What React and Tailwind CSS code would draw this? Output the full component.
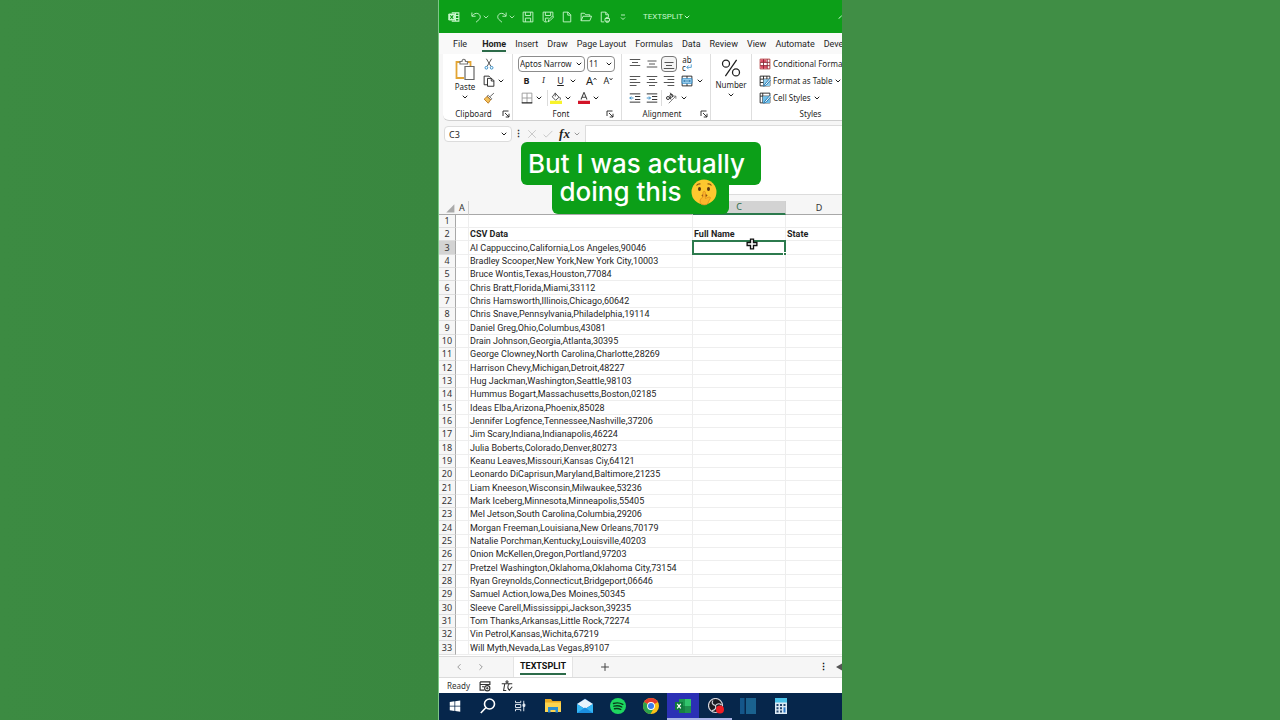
import clsx from 'clsx';
import { ChevronDown, ChevronLeft, ChevronRight, Plus } from 'lucide-react';

const tabs = [
	'Home',
	'Insert',
	'Draw',
	'Page Layout',
	'Formulas',
	'Data',
	'Review',
	'View',
	'Automate',
	'Developer',
];

const records = [
	'Al Cappuccino,California,Los Angeles,90046',
	'Bradley Scooper,New York,New York City,10003',
	'Bruce Wontis,Texas,Houston,77084',
	'Chris Bratt,Florida,Miami,33112',
	'Chris Hamsworth,Illinois,Chicago,60642',
	'Chris Snave,Pennsylvania,Philadelphia,19114',
	'Daniel Greg,Ohio,Columbus,43081',
	'Drain Johnson,Georgia,Atlanta,30395',
	'George Clowney,North Carolina,Charlotte,28269',
	'Harrison Chevy,Michigan,Detroit,48227',
	'Hug Jackman,Washington,Seattle,98103',
	'Hummus Bogart,Massachusetts,Boston,02185',
	'Ideas Elba,Arizona,Phoenix,85028',
	'Jennifer Logfence,Tennessee,Nashville,37206',
	'Jim Scary,Indiana,Indianapolis,46224',
	'Julia Boberts,Colorado,Denver,80273',
	'Keanu Leaves,Missouri,Kansas Ciy,64121',
	'Leonardo DiCaprisun,Maryland,Baltimore,21235',
	'Liam Kneeson,Wisconsin,Milwaukee,53236',
	'Mark Iceberg,Minnesota,Minneapolis,55405',
	'Mel Jetson,South Carolina,Columbia,29206',
	'Morgan Freeman,Louisiana,New Orleans,70179',
	'Natalie Porchman,Kentucky,Louisville,40203',
	'Onion McKellen,Oregon,Portland,97203',
	'Pretzel Washington,Oklahoma,Oklahoma City,73154',
	'Ryan Greynolds,Connecticut,Bridgeport,06646',
	'Samuel Action,Iowa,Des Moines,50345',
	'Sleeve Carell,Mississippi,Jackson,39235',
	'Tom Thanks,Arkansas,Little Rock,72274',
	'Vin Petrol,Kansas,Wichita,67219',
	'Will Myth,Nevada,Las Vegas,89107',
];

const rows = [
	{ b: '', c: '', d: '' },
	{ b: 'CSV Data', c: 'Full Name', d: 'State', heading: true },
	...records.map((b) => ({ b, c: '', d: '' })),
];

const Icon = ({ children, className = 'size-3', box = '0 0 16 16' }) => (
	<svg
		viewBox={box}
		className={clsx('shrink-0', className)}
		fill="none"
		stroke="currentColor"
		strokeWidth="1.2"
		aria-hidden="true">
		{children}
	</svg>
);

const Caret = ({ className }) => (
	<ChevronDown
		className={clsx('size-2 shrink-0', className)}
		strokeWidth={3}
		aria-hidden="true"
	/>
);

const Tool = ({ label, children, className = 'w-4' }) => (
	<button
		type="button"
		aria-label={label}
		className={clsx('flex h-4 shrink-0 items-center justify-center', className)}>
		{children}
	</button>
);

const Divider = () => <div className="h-4 w-px shrink-0 bg-[#dcdcdc]" />;

const Lines = ({ d }) => (
	<Icon className="size-3 text-[#444]">
		<path d={d} />
	</Icon>
);

const TitleBar = () => (
	<header className="flex h-[33px] items-center overflow-hidden bg-[#0c9f18] pl-[9px] text-[#c9f7cd]">
		<Icon className="mr-2.5 size-3">
			<path d="M5 2.5h9.5v11H5M5 6h9.5M5 10h9.5M10 2.5v11" strokeWidth="1.4" />
			<path d="M1 4h8v8H1z" fill="currentColor" />
			<path d="m3 5.8 4 4.6M7 5.8l-4 4.6" stroke="#0c9f18" strokeWidth="1.4" />
		</Icon>
		<Tool label="Undo" className="w-3">
			<Icon>
				<path d="M2.5 2v5h5M3 6.5C5 3.5 8 2.5 10.5 3.5c3.5 1.5 4 5 2 7.5L8 15" />
			</Icon>
		</Tool>
		<Caret className="mr-1.5 opacity-80" />
		<Tool label="Redo" className="w-3">
			<Icon>
				<path d="M13.5 2v5h-5M13 6.5C11 3.5 8 2.5 5.5 3.5 2 5 1.5 8.5 3.5 11L8 15" />
			</Icon>
		</Tool>
		<Caret className="mr-0.5 opacity-80" />
		<Tool label="Save" className="w-5">
			<Icon>
				<path d="M1.5 1.5h13v13h-13zM4.5 1.5V6h7V1.5M4.5 14.5v-5h7v5" />
			</Icon>
		</Tool>
		<Tool label="Save As" className="w-[19px]">
			<Icon>
				<path d="M7 14.5H3.5l-2-2v-11h13V7M4.5 1.5V6h7V1.5M4.5 14V9.5H9M8 14.5l1-3 5-5L15.5 8l-5 5z" />
			</Icon>
		</Tool>
		<Tool label="New" className="w-[19px]">
			<Icon>
				<path d="M3 1.5h6.5L13 5v9.5H3zM9 1.5v4h4" />
			</Icon>
		</Tool>
		<Tool label="Open" className="w-[19px]">
			<Icon>
				<path d="M1.5 13V3H6l1.5 2H13v2M1.5 13 4 7h11.5L13 13z" />
			</Icon>
		</Tool>
		<Tool label="Print Preview" className="w-5">
			<Icon>
				<path d="M7 14.5H3v-13h6L12.5 5v3M9 1.5V5h3.5M8 10h6v3.5H8zM9.5 10V8.5h3V10M9.5 13.5V15h3v-1.5" />
			</Icon>
		</Tool>
		<Tool label="Customize Quick Access Toolbar" className="w-4">
			<Icon className="size-2">
				<path d="M4 4h8M4 9l4 4 4-4" strokeWidth="1.8" />
			</Icon>
		</Tool>
		<button
			type="button"
			className="ml-3 flex items-center font-['Roboto'] text-[8px] leading-3">
			TEXTSPLIT
			<Caret />
		</button>
		<Icon className="ml-auto size-1">
			<path d="M2 15 15 3" strokeWidth="4" />
		</Icon>
	</header>
);

const RibbonTabs = () => (
	<nav className="flex h-[21px] items-center gap-[9px] overflow-hidden bg-[#f9f9f9] pl-3.5 font-['Roboto'] text-[9px]">
		<a href="#file" className="mr-1.5 shrink-0 leading-3">
			File
		</a>
		{tabs.map((tab) => (
			<a
				key={tab}
				href={`#${tab}`}
				className={clsx(
					'shrink-0 border-b-2 pt-0.5 leading-3',
					tab === 'Home'
						? 'border-[#2c6b49] font-bold'
						: 'border-transparent',
				)}>
				{tab}
			</a>
		))}
	</nav>
);

const Group = ({ title, launcher, className, children }) => (
	<section
		className={clsx(
			'flex h-[66px] shrink-0 flex-col border-r border-[#dedede]',
			className,
		)}>
		<div className="flex flex-1 items-start">{children}</div>
		<div className="relative flex h-3 items-center justify-center pr-3 leading-3">
			{title}
			{launcher && (
				<button
					type="button"
					aria-label={`${title} settings`}
					className="absolute right-0.5 bottom-0.5">
					<Icon className="size-2">
						<path d="M2 12V2h11M6 6l8 8M14 7.5V14H7.5" strokeWidth="1.8" />
					</Icon>
				</button>
			)}
		</div>
	</section>
);

const Dropdown = ({ label, value, className }) => (
	<div className={clsx('relative h-4', className)}>
		<select
			aria-label={label}
			defaultValue={value}
			className="h-4 w-full appearance-none rounded border border-[#8c8c8c] bg-white pl-px leading-3">
			<option>{value}</option>
		</select>
		<Caret className="pointer-events-none absolute top-1 right-0.5" />
	</div>
);

const Clipboard = () => (
	<Group title="Clipboard" launcher className="w-[70px] pl-1">
		<button
			type="button"
			className="flex w-9 shrink-0 flex-col items-center pt-1 leading-3">
			<Icon className="mb-px h-[22px] w-5" box="0 0 20 22">
				<path d="M9 20H1.5V4H5M12 4h3.5v4" stroke="#e3a534" strokeWidth="1.8" />
				<path d="M5 6V3.5h2c0-3 3.5-3 3.5 0h2V6z" stroke="#777" />
				<path d="M10 8.5h9v13h-9z" fill="#fff" stroke="#666" />
			</Icon>
			Paste
			<Caret />
		</button>
		<div className="flex flex-col gap-px pt-0.5">
			<Tool label="Cut" className="w-3">
				<Icon>
					<path d="m4.500 1 6 10M11.500 1l-6 10" stroke="#444" />
					<circle cx="4.5" cy="13" r="1.8" stroke="#2686c4" />
					<circle cx="11.5" cy="13" r="1.8" stroke="#2686c4" />
				</Icon>
			</Tool>
			<Tool label="Copy" className="w-[22px] gap-0.5">
				<Icon>
					<path d="M6 13H1.5V1.5H8l2 2M6 4.500h5.500l3 3V15H6zM11 4.500V8h3.500" />
				</Icon>
				<Caret />
			</Tool>
			<Tool label="Format Painter" className="w-3">
				<Icon>
					<path d="M14.500 1.500 9.500 6M7 4.500 11.500 9l-1 1.500-5-5z" stroke="#555" />
					<path d="M5.500 6 10 10.500 7 15 1.500 9.500z" fill="#f3c15b" stroke="#bd7a1f" />
				</Icon>
			</Tool>
		</div>
	</Group>
);

const FontGroup = () => (
	<Group title="Font" launcher className="w-[109px] px-[5px]">
		<div className="flex flex-col gap-px pt-0.5">
			<div className="flex gap-0.5">
				<Dropdown label="Font" value="Aptos Narrow" className="w-[67px]" />
				<Dropdown label="Font Size" value="11" className="w-7" />
			</div>
			<div className="flex items-center text-[9px]">
				<Tool label="Bold" className="w-[17px]">
					<b>B</b>
				</Tool>
				<Tool label="Italic" className="w-[17px]">
					<i className="font-serif">I</i>
				</Tool>
				<Tool label="Underline" className="w-[17px]">
					<u>U</u>
				</Tool>
				<Caret />
				<Tool label="Increase Font Size" className="ml-1.5 w-[17px] text-[11px]">
					A
					<Icon className="mb-1 size-1">
						<path d="m2 12 6-8 6 8" strokeWidth="3" />
					</Icon>
				</Tool>
				<Tool label="Decrease Font Size" className="w-[17px]">
					A
					<Icon className="mb-1 size-1">
						<path d="m2 4 6 8 6-8" strokeWidth="3" />
					</Icon>
				</Tool>
			</div>
			<div className="flex items-center">
				<Tool label="Borders" className="w-[17px]">
					<Icon>
						<path d="M1.500 1.500h13v13M1.500 1.500v13M8 1.500v13M1.500 8h13" stroke="#999" />
						<path d="M1 14.500h14" stroke="#222" strokeWidth="1.5" />
					</Icon>
				</Tool>
				<Caret className="mr-1" />
				<Divider />
				<Tool label="Fill Color" className="w-4">
					<Icon>
						<path d="M7 1.500 12 7l-4.500 4L3 6.500zM7 1v5M12.500 6.500c2 2 1.500 4 .5 4" stroke="#444" />
						<path d="M0 11.500h16V16H0z" fill="#f8f32b" stroke="none" />
					</Icon>
				</Tool>
				<Caret className="mr-1" />
				<Tool label="Font Color" className="w-4">
					<Icon>
						<path d="M4 10 8 .5 12 10M5.500 7h5" stroke="#444" strokeWidth="1.4" />
						<path d="M0 11.500h16V16H0z" fill="#d21428" stroke="none" />
					</Icon>
				</Tool>
				<Caret />
			</div>
		</div>
	</Group>
);

const AlignmentGroup = () => (
	<Group title="Alignment" launcher className="w-[89px] pl-1">
		<div className="flex flex-col gap-px pt-0.5">
			<div className="flex items-center">
				<Tool label="Top Align" className="w-[17px]">
					<Lines d="M1 2h14M4 6h8M1 10h14" />
				</Tool>
				<Tool label="Middle Align" className="w-[18px]">
					<Lines d="M2 4h12M4 8h8M1 12h14" />
				</Tool>
				<Tool
					label="Bottom Align"
					className="w-4 rounded border border-[#777] bg-[#f5f5f5]">
					<Lines d="M2 6h12M4 10h8M1 14h14" />
				</Tool>
				<Tool label="Wrap Text" className="w-5 flex-col leading-2">
					<span>ab</span>
					<span className="flex">
						c
						<Icon className="size-1.5 text-[#2686c4]">
							<path d="M14 1v8H3M7 4 2 9l5 5" strokeWidth="2" />
						</Icon>
					</span>
				</Tool>
			</div>
			<div className="flex items-center">
				<Tool label="Align Left" className="w-[17px]">
					<Lines d="M1 2h14M1 6h9M1 10h14M1 14h9" />
				</Tool>
				<Tool label="Center" className="w-[18px]">
					<Lines d="M1 2h14M4 6h8M1 10h14M4 14h8" />
				</Tool>
				<Tool label="Align Right" className="w-4">
					<Lines d="M1 2h14M6 6h9M1 10h14M6 14h9" />
				</Tool>
				<Tool label="Merge and Center" className="w-[19px]">
					<Icon>
						<path d="M1.500 1.500h13v13h-13zM8 1.500V5M8 11v3.500" />
						<path d="M1.500 5h13v6h-13z" fill="#bfe3f7" stroke="#2686c4" />
						<path d="M3.500 8h9M5 6.500 3.500 8 5 9.500M11 6.500 12.500 8 11 9.500" stroke="#1b6fa8" />
					</Icon>
				</Tool>
				<Caret />
			</div>
			<div className="flex items-center">
				<Tool label="Decrease Indent" className="w-[17px]">
					<Icon>
						<path d="M1 2.500h14M8 6h7M8 10h7M1 13.500h14" />
						<path d="M6 8H1M3 6 1 8l2 2" stroke="#2686c4" />
					</Icon>
				</Tool>
				<Tool label="Increase Indent" className="w-[18px]">
					<Icon>
						<path d="M1 2.500h14M8 6h7M8 10h7M1 13.500h14" />
						<path d="M1 8h5M4 6l2 2-2 2" stroke="#2686c4" />
					</Icon>
				</Tool>
				<Divider />
				<Tool label="Orientation" className="w-[18px]">
					<Icon>
						<path d="M5 15 14.500 5.500M11 5.500h3.500V9" stroke="#777" />
						<circle cx="4" cy="8" r="2" />
						<circle cx="8.5" cy="5" r="2" />
						<path d="M6.500 6.500 8 10M7 1l3 5" />
					</Icon>
				</Tool>
				<Caret />
			</div>
		</div>
	</Group>
);

const StyleItem = ({ label, caret, children }) => (
	<button
		type="button"
		className="flex h-4 items-center gap-0.5 whitespace-nowrap leading-3">
		<Icon>{children}</Icon>
		{label}
		{caret && <Caret />}
	</button>
);

const StylesGroup = () => (
	<Group title="Styles" className="w-[123px] pl-[7px]">
		<div className="flex flex-col gap-px pt-0.5">
			<StyleItem label="Conditional Formatting" caret>
				<path d="M1.500 1.500h13v13h-13z" fill="#fff" stroke="#a33" />
				<path d="M2 2h8v4H2zM2 10h9v4H2z" fill="#e0536a" stroke="none" />
				<path d="M1.500 5.800h13M1.500 10.200h13M6 1.500v13M11 1.500v13" stroke="#8a2835" />
			</StyleItem>
			<StyleItem label="Format as Table" caret>
				<path d="M1.500 1.500h13v13h-13zM1.500 5.500h13M1.500 10h13M6 1.500v13M10.500 1.500v13" />
				<path d="M6 5.500h8.500v9H6z" fill="#8fd0f2" stroke="none" />
				<path d="m15 4-7 8-2 3 3.500-1.500L16 6" fill="#fff" stroke="#1b6fa8" />
			</StyleItem>
			<StyleItem label="Cell Styles" caret>
				<path d="M1.500 1.500h13v13h-13zM1.500 5.500h13M5 1.500v13" />
				<path d="M5 5.500h9.500v9H5z" fill="#6fc0ec" stroke="none" />
				<path d="m15 4-7 8-2 3 3.500-1.500L16 6" fill="#fff" stroke="#1b6fa8" />
			</StyleItem>
		</div>
	</Group>
);

const Ribbon = () => (
	<div className="ml-1 flex h-[67px] overflow-hidden rounded-bl-md border-b border-[#cfcfcf] bg-white">
		<Clipboard />
		<FontGroup />
		<AlignmentGroup />
		<Group title="" className="w-[41px]">
			<button
				type="button"
				className="flex w-full flex-col items-center pt-1 leading-3">
				<Icon className="mb-px size-5">
					<circle cx="4" cy="4.5" r="2.8" strokeWidth="1" />
					<circle cx="12" cy="11.5" r="2.8" strokeWidth="1" />
					<path d="m12.500 1.500-9 13" strokeWidth="1" />
				</Icon>
				Number
				<Caret />
			</button>
		</Group>
		<StylesGroup />
	</div>
);

const FormulaBar = () => (
	<div className="flex h-[70px]">
		<div className="ml-[5px] flex h-[18px] shrink-0 items-center">
			<div className="relative w-[68px]">
				<input
					aria-label="Name Box"
					defaultValue="C3"
					className="h-4 w-full rounded-sm border border-[#dcdcdc] bg-white pl-1 text-[9px] leading-3"
				/>
				<Caret className="absolute top-1 right-1" />
			</div>
			<span className="w-3 text-center text-[9px] font-bold">⋮</span>
			<Tool label="Cancel">
				<Icon className="size-2.5 text-[#bbb]">
					<path d="m2 2 12 12M14 2 2 14" />
				</Icon>
			</Tool>
			<Tool label="Enter">
				<Icon className="size-2.5 text-[#bbb]">
					<path d="m1 9 4 4L15 3" />
				</Icon>
			</Tool>
			<Tool label="Insert Function" className="w-[17px]">
				<i className="font-['Liberation_Serif'] text-[13px] font-bold">fx</i>
			</Tool>
			<Caret className="mr-1 text-[#999]" />
		</div>
		<textarea
			aria-label="Formula"
			className="min-w-0 flex-1 resize-none border-y border-l border-[#dcdcdc] bg-white"
		/>
	</div>
);

const headClass =
	'h-3.5 border-b border-[#a8a8a8] p-0 text-center leading-3 font-normal';

const ColumnHead = ({ letter, active }) => (
	<th
		scope="col"
		className={clsx(
			headClass,
			'border-r border-r-[#cfcfcf]',
			active && 'border-b-2 border-b-[#2c7a4d] bg-[#d3d3d3] text-[#2c6b49]',
		)}>
		{letter}
	</th>
);

const cellClass =
	'border-r border-b border-[#eeeeee] p-0 pl-px leading-3 whitespace-nowrap';

const Selection = () => (
	<div className="absolute -inset-px border-2 border-[#2c7a4d]">
		<div className="absolute -right-[3px] -bottom-[3px] size-1 border border-white bg-[#2c7a4d]" />
		<Icon className="absolute -top-1 right-[26px] size-3">
			<path
				d="M6 1.500h4V6h4.500v4H10v4.500H6V10H1.500V6H6z"
				fill="#fff"
				stroke="#111"
				strokeWidth="1.8"
			/>
		</Icon>
	</div>
);

const Sheet = () => (
	<div className="flex-1 overflow-hidden bg-white text-[9px]">
		<table className="w-[414px] table-fixed border-separate border-spacing-0">
			<colgroup>
				<col className="w-[17px]" />
				<col className="w-[13px]" />
				<col className="w-[224px]" />
				<col className="w-[93px]" />
				<col className="w-[67px]" />
			</colgroup>
			<thead className="bg-[#f6f6f6] text-[#333]">
				<tr>
					<th className={headClass}>
						<Icon className="ml-1.5 size-2.5">
							<path d="M15 2v13H2z" fill="#aaa" stroke="none" />
						</Icon>
					</th>
					<ColumnHead letter="A" />
					<ColumnHead letter="B" />
					<ColumnHead letter="C" active />
					<ColumnHead letter="D" />
				</tr>
			</thead>
			<tbody>
				{rows.map((row, i) => (
					<tr
						key={i}
						className={clsx(
							(i + 1) % 3 === 0 ? 'h-3.5' : 'h-[13px]',
							row.heading ? 'font-bold' : 'font-normal',
						)}>
						<th
							scope="row"
							className={clsx(
								'border-r border-b border-r-[#a8a8a8] border-b-[#dedede] p-0 text-center leading-3 font-normal text-[#333]',
								i === 2 ? 'bg-[#d3d3d3]' : 'bg-[#f6f6f6]',
							)}>
							{i + 1}
						</th>
						<td className={cellClass} />
						<td className={clsx(cellClass, "font-['Roboto']")}>{row.b}</td>
						<td className={clsx(cellClass, "relative font-['Roboto']")}>
							{row.c}
							{i === 2 && <Selection />}
						</td>
						<td className={clsx(cellClass, "font-['Roboto']")}>{row.d}</td>
					</tr>
				))}
			</tbody>
		</table>
	</div>
);

const SheetTabs = () => (
	<div className="flex h-[22px] items-center border-y border-[#dcdcdc] bg-[#f6f6f6] text-[9px] text-[#444]">
		<Tool label="Previous sheet" className="ml-3 w-4">
			<ChevronLeft className="size-2.5 text-[#888]" />
		</Tool>
		<Tool label="Next sheet" className="ml-1.5 w-4">
			<ChevronRight className="size-2.5 text-[#888]" />
		</Tool>
		<button
			type="button"
			className="ml-6 h-full border-x border-[#e4e4e4] bg-white px-1.5 font-['Roboto'] font-bold text-[#111]">
			<span className="block border-b-2 border-[#2c6b49] leading-[14px]">
				TEXTSPLIT
			</span>
		</button>
		<Tool label="New sheet" className="ml-6 w-4">
			<Plus className="size-3" />
		</Tool>
		<span className="ml-auto font-bold text-black">⋮</span>
		<Icon className="ml-1.5 size-2">
			<path d="M16 1v14L4 8z" fill="#555" stroke="none" />
		</Icon>
	</div>
);

const StatusBar = () => (
	<footer className="flex h-[15px] items-center bg-white pl-2 text-[#333]">
		<span className="w-8">Ready</span>
		<Icon className="mr-2.5 size-3">
			<path d="M1.500 2.500h13v4M1.500 2.500v11H7M1.500 6h13M4 9h3" strokeWidth="1.6" />
			<circle cx="11" cy="11" r="3.5" strokeWidth="1.5" />
			<circle cx="11" cy="11" r="1" fill="currentColor" />
		</Icon>
		<Icon>
			<path d="M1 5h14M5 5l-1.500 9H7M8 1.500v2" strokeWidth="1.4" />
			<circle cx="8" cy="2.5" r="1.5" />
			<path d="M11 5c-3 3-2 8 1 9M9 11l2.500 2L15 9" strokeWidth="1.4" />
		</Icon>
	</footer>
);

const apps = [
	{
		name: 'Start',
		art: (
			<g fill="#fff" stroke="none">
				<path d="M1 2.500 7.300 1.700v6H1zM8.300 1.500 15 .7v7H8.300zM1 8.500h6.300v6L1 13.700zM8.300 8.500H15v7l-6.700-.9z" />
			</g>
		),
	},
	{
		name: 'Search',
		art: (
			<g stroke="#fff" strokeWidth="1.6">
				<circle cx="9.5" cy="6" r="5" />
				<path d="M6 9.500.8 15" />
			</g>
		),
	},
	{
		name: 'Task View',
		art: (
			<g stroke="#dfe6f0" strokeWidth="1.3">
				<path d="M2 1v2.500h7V1M2 15v-2.500h7V15M2 6h7v4H2zM13 1v14" />
				<path d="M12 5.500h2.500v3H12z" fill="#fff" />
			</g>
		),
	},
	{
		name: 'File Explorer',
		art: (
			<g stroke="none">
				<path d="M0 1h6l1.500 2H16v11H0z" fill="#e9a920" />
				<path d="M0 4.500h16V14H0z" fill="#fdd44f" />
				<path d="M3 14.500V9h10v5.500h-2.500V12h-5v2.500z" fill="#2c8ed0" />
			</g>
		),
	},
	{
		name: 'Mail',
		art: (
			<g stroke="none">
				<path d="M0 6 8 .5 16 6v9H0z" fill="#0f5fae" />
				<path d="M0 6 8 1l8 5-8 5z" fill="#e8f4fc" />
				<path d="m0 6 8 5 8-5v9H0z" fill="#35b6f4" />
				<path d="m0 15 8-5.500 8 5.500z" fill="#1b8fe0" />
			</g>
		),
	},
	{
		name: 'Spotify',
		art: (
			<g>
				<circle cx="8" cy="8" r="8" fill="#1ed760" stroke="none" />
				<path
					d="M3.500 5.500c3-1 6.500-.7 9.300.8M4 8.200c2.600-.8 5.400-.5 7.800.8M4.500 10.800c2.200-.6 4.400-.4 6.300.7"
					stroke="#083a1a"
					strokeWidth="1.4"
					strokeLinecap="round"
				/>
			</g>
		),
	},
	{
		name: 'Chrome',
		art: (
			<g stroke="none">
				<circle cx="8" cy="8" r="8" fill="#fbc116" />
				<path d="M8 8 1.100 4A8 8 0 0 1 14.900 4z" fill="#e33b2e" />
				<path d="M8 8 1.100 4A8 8 0 0 0 7.500 16L11 10z" fill="#2ba24c" />
				<circle cx="8" cy="8" r="3.9" fill="#fff" />
				<circle cx="8" cy="8" r="3" fill="#3b7ded" />
			</g>
		),
	},
	{
		name: 'Excel',
		active: true,
		running: true,
		art: (
			<g stroke="none">
				<path d="M4 1h6v14H4z" fill="#1d9a4f" />
				<path d="M10 1h6v14h-6z" fill="#32c46c" />
				<path d="M4 8h12v7H4z" fill="#12713b" opacity=".6" />
				<path d="M0 4h8v8H0z" fill="#0f7a3c" />
				<path d="m2.200 5.800 3.600 4.500M5.800 5.800l-3.600 4.500" stroke="#fff" strokeWidth="1.2" />
			</g>
		),
	},
	{
		name: 'OBS',
		running: true,
		art: (
			<g>
				<circle cx="7.5" cy="7.5" r="7" fill="#1c1c22" stroke="#d5d5dd" />
				<path d="M7.500 7.500C4 7 3.500 4.500 5 2.500M7.500 7.500c2-2.500 4.500-2 6-.5M7.500 7.500c1 3-1 5-3.500 5" stroke="#d5d5dd" />
				<circle cx="12" cy="11.5" r="4" fill="#f01c24" stroke="none" />
			</g>
		),
	},
	{
		name: 'Panels',
		art: (
			<g stroke="none">
				<path d="M0 0h4.500v16H0z" fill="#14568a" />
				<path d="M6 0h10v16H6z" fill="#1a628f" />
			</g>
		),
	},
	{
		name: 'Calculator',
		art: (
			<g stroke="none">
				<path d="M2 0h12v16H2z" fill="#dce9f3" />
				<path d="M2 0h12v4.500H2z" fill="#49c1e8" />
				<path
					d="M3.500 6h2v2h-2zM7 6h2v2H7zM10.500 6h2v2h-2zM3.500 9.300h2v2h-2zM7 9.300h2v2H7zM3.500 12.500h2v2h-2zM7 12.500h2v2H7z"
					fill="#23466e"
				/>
				<path d="M10.500 9.300h2v5.200h-2z" fill="#2a78c8" />
			</g>
		),
	},
];

const Taskbar = () => (
	<div className="h-[27px] bg-[#06264b]">
		<div className="grid h-full w-[358px] grid-cols-11">
			{apps.map(({ name, art, active, running }) => (
				<button
					key={name}
					type="button"
					aria-label={name}
					className={clsx(
						'flex items-center justify-center border-b-2',
						active && 'bg-[#2b30b5]',
						running ? 'border-[#a9b4e6]' : 'border-transparent',
					)}>
					<Icon
						className={clsx(
							name === 'Start' || name === 'Task View' ? 'size-3' : 'size-4',
						)}>
						{art}
					</Icon>
				</button>
			))}
		</div>
	</div>
);

const ShushingFace = () => (
	<Icon className="size-7" box="0 0 28 28">
		<circle cx="14" cy="14" r="12.5" fill="#fdc82f" stroke="none" />
		<path d="M6.500 7.500c1-1.300 2.500-1.800 4-1.500M17.500 6c1.500-.3 3 .2 4 1.500" stroke="#8a5312" />
		<ellipse cx="9.5" cy="11" rx="1.5" ry="2" fill="#5c3510" stroke="none" />
		<ellipse cx="18.5" cy="11" rx="1.5" ry="2" fill="#5c3510" stroke="none" />
		<ellipse cx="14.5" cy="17.5" rx="3" ry="1.2" fill="#8a4a14" stroke="none" />
		<path
			d="M13 14.500c0-1.500 2.400-1.500 2.400 0v6L19 19c1.600-.3 1.800 1.300.8 2l-2.300 5c-1.500 1.200-5 1.200-6.500 0-1.500-2-1-4.500.5-6l1.500-1z"
			fill="#fbb62c"
			stroke="#dd8a1c"
			strokeWidth=".7"
		/>
	</Icon>
);

const Caption = () => (
	<p className="absolute top-[142px] left-1/2 flex w-60 -translate-x-1/2 flex-col items-center font-['Inter'] text-[26px] leading-7 font-medium text-white">
		<span className="flex h-[43px] w-full items-end justify-center rounded-md bg-[#0c9f18] pr-2 pb-[7px] whitespace-nowrap">
			But I was actually
		</span>
		<span className="flex h-[29px] w-[177px] items-end justify-center gap-2 rounded-b-md bg-[#0c9f18] pr-1 pb-2 whitespace-nowrap">
			doing this
			<ShushingFace />
		</span>
	</p>
);

export default function App() {
	return (
		<div className="grid min-h-screen grid-cols-[1fr_minmax(0,404px)_1fr] bg-[#408e45]">
			<div className="bg-linear-to-r from-[#3c8b42] to-[#39873f]" />
			<main className="relative flex flex-col overflow-hidden border-l border-[#7cc586] bg-[#f6f6f6] font-['Noto_Sans',sans-serif] text-[8px] text-[#1f1f1f]">
				<TitleBar />
				<RibbonTabs />
				<Ribbon />
				<div className="h-1" />
				<FormulaBar />
				<div className="h-1.5" />
				<Sheet />
				<SheetTabs />
				<StatusBar />
				<Taskbar />
				<Caption />
			</main>
			<div />
		</div>
	);
}
